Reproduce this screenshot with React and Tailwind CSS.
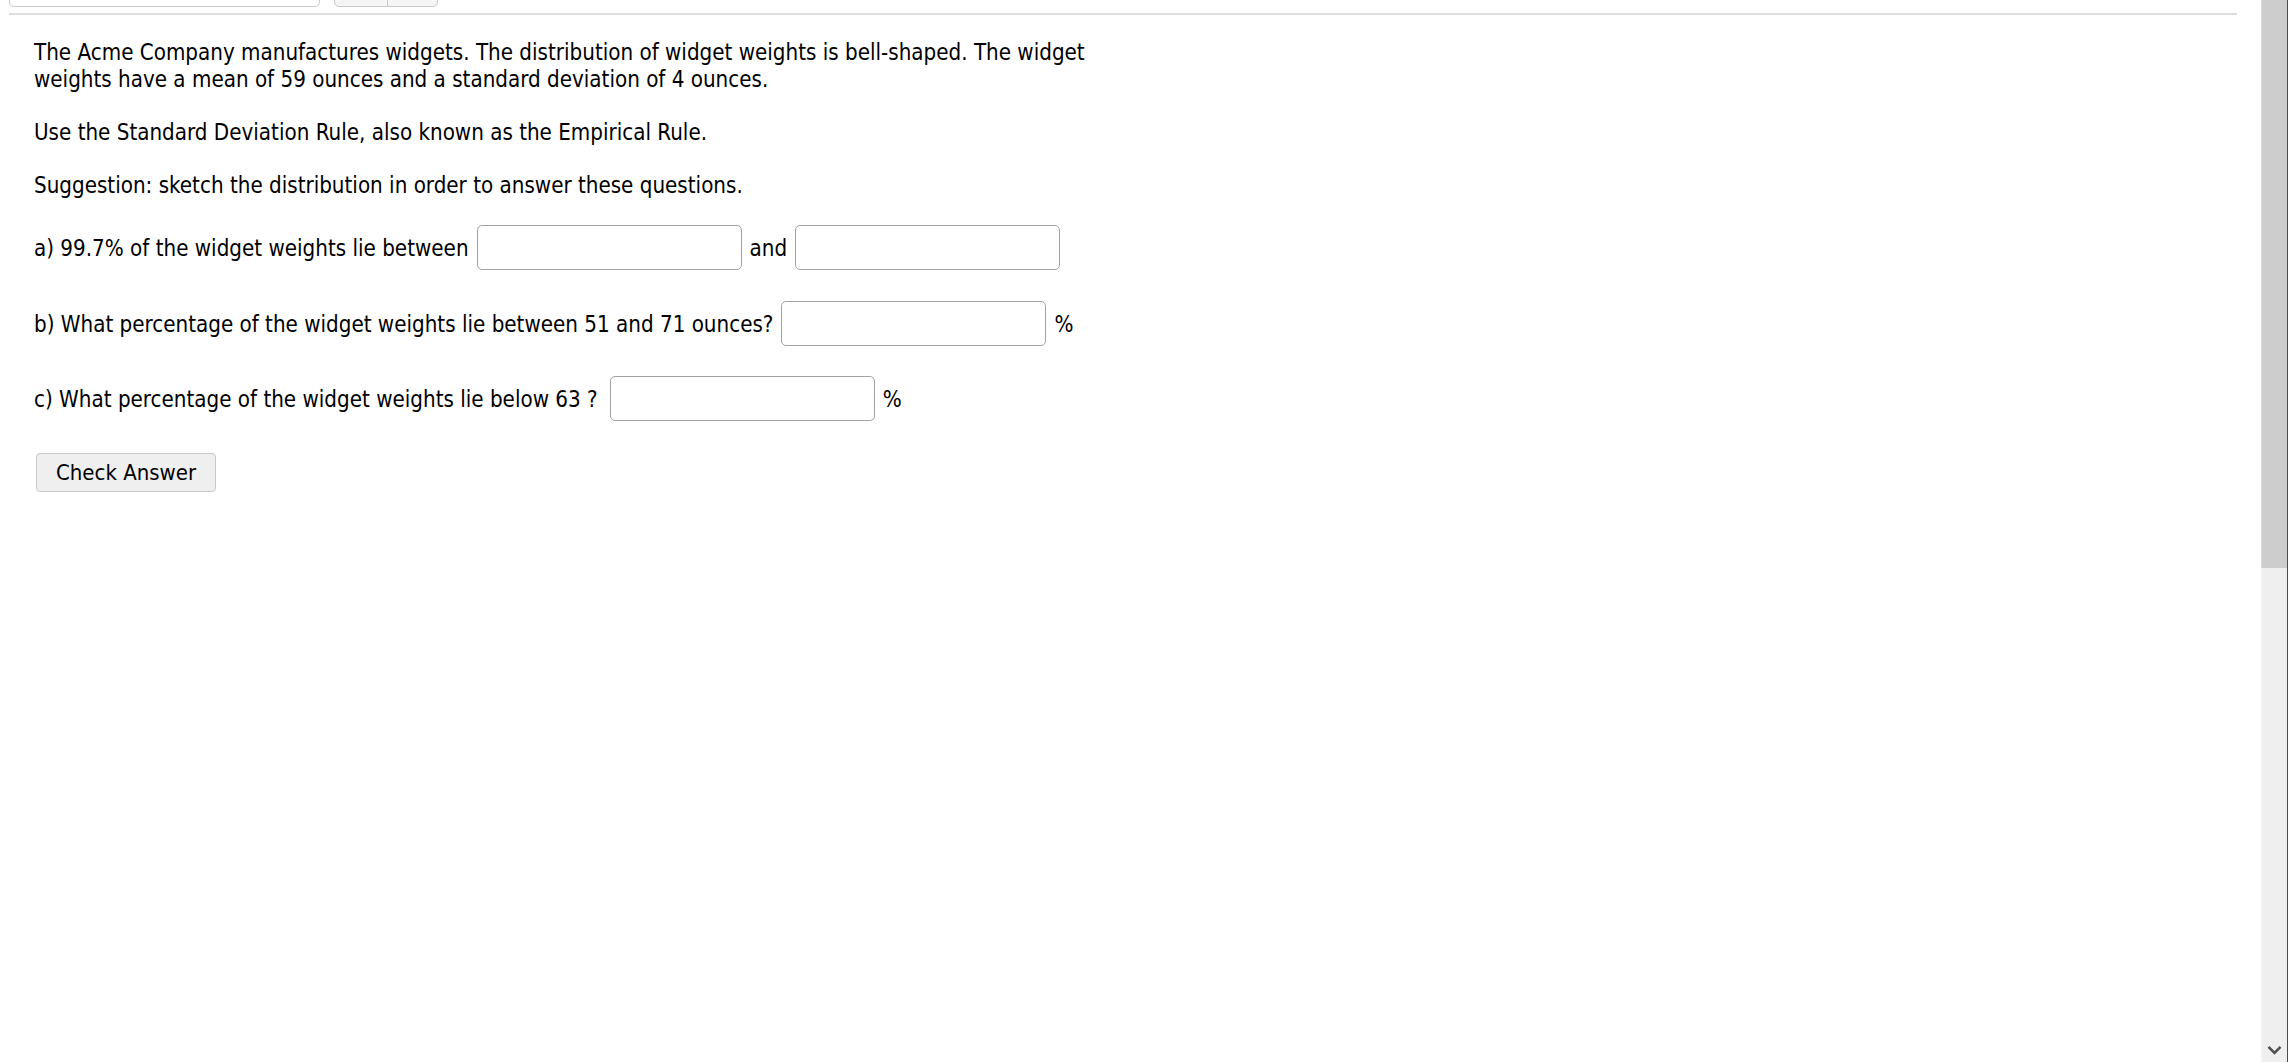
import React from "react";

// single numeric-answer box, same size everywhere on the page
const AnswerBox = () => (
  <input
    type="text"
    className="w-[265px] h-[45px] shrink-0 rounded-[5px] border border-[#a2a2a2] bg-white px-2 outline-none"
  />
);

const Question = ({ children, className = "" }) => (
  <div className={`flex items-center gap-[8px] whitespace-nowrap ${className}`}>{children}</div>
);

const Text = ({ children, className = "" }) => <span className={`mt-[2px] ${className}`}>{children}</span>;

function ScrollBar() {
  return (
    <div className="flex h-full w-[27px] shrink-0 flex-col border-r border-[#4d4d4d]">
      {/* thumb */}
      <div className="h-[568px] border-l border-[#dadada] bg-[#cdcdcd]"></div>
      {/* track + arrow */}
      <div className="flex flex-1 flex-col items-center justify-end border-l border-[#f7f7f7] bg-[#efefef] pb-[7px]">
        <svg width="15" height="10" viewBox="0 0 15 10" fill="none">
          <path d="M1.5 1.8 L7.5 7.8 L13.5 1.8" stroke="#505050" strokeWidth="2.6" />
        </svg>
      </div>
    </div>
  );
}

export default function App() {
  return (
    <div className="flex h-screen w-full overflow-hidden bg-white font-['DejaVu_Sans_Condensed','DejaVu_Sans',sans-serif] font-stretch-condensed text-black">
      <div className="flex min-w-0 flex-1 flex-col">
        {/* toolbar, mostly scrolled out of view */}
        <div className="flex h-[7px] items-end gap-[14px] overflow-hidden pl-[9px]">
          <div className="h-[36px] w-[311px] rounded-[5px] border border-[#c9c9c9] bg-white"></div>
          <div className="flex h-[36px] w-[104px] rounded-[5px] border border-[#c9c9c9] bg-[#f5f5f5]">
            <div className="w-[53px] border-r border-[#c9c9c9]"></div>
            <div className="flex-1"></div>
          </div>
        </div>

        <div className="ml-[9px] mr-[24px] mt-[6px] h-[2px] bg-[#dddddd]"></div>

        <div className="pl-[34px] text-[22.2px] leading-[27px]">
          <p className="mt-[24px] w-[1095px]">
            The Acme Company manufactures widgets. The distribution of widget weights is bell-shaped. The widget
            weights have a mean of 59 ounces and a standard deviation of 4 ounces.
          </p>
          <p className="mt-[26px]">Use the Standard Deviation Rule, also known as the Empirical Rule.</p>
          <p className="mt-[26px]">Suggestion: sketch the distribution in order to answer these questions.</p>

          <Question className="mt-[26px]">
            <Text>a) 99.7% of the widget weights lie between</Text>
            <AnswerBox />
            <Text>and</Text>
            <AnswerBox />
          </Question>

          <Question className="mt-[31px]">
            <Text>b) What percentage of the widget weights lie between 51 and 71 ounces?</Text>
            <AnswerBox />
            <Text>%</Text>
          </Question>

          <Question className="mt-[30px]">
            <Text className="mr-[4px]">c) What percentage of the widget weights lie below 63 ?</Text>
            <AnswerBox />
            <Text>%</Text>
          </Question>

          <button
            type="button"
            className="ml-[2px] mt-[32px] h-[39px] w-[180px] rounded-[4px] border border-[#c8c8c8] bg-[#efefef] text-[22px] leading-none text-black"
          >
            Check Answer
          </button>
        </div>
      </div>

      <ScrollBar />
    </div>
  );
}
